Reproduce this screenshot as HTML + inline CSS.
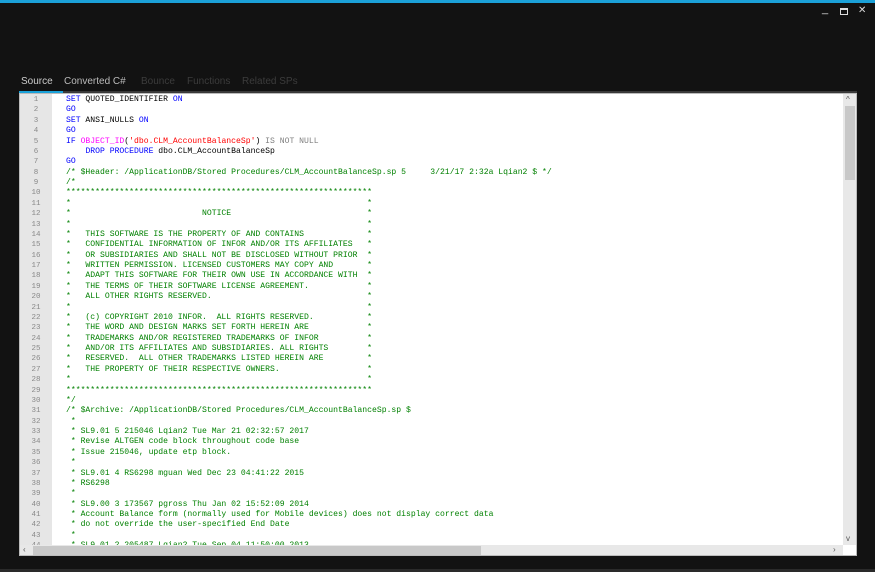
<!DOCTYPE html>
<html><head><meta charset="utf-8"><style>
*{margin:0;padding:0;box-sizing:border-box}
body{width:875px;height:572px;background:#121212;position:relative;overflow:hidden;font-family:"Liberation Sans",sans-serif}
.top{position:absolute;left:0;top:0;width:875px;height:3px;background:#1ba1d8}
.wc{position:absolute;top:6px;color:#ddd;font-size:11px}
.tabs{position:absolute;top:76px;left:21px;font-size:10px;color:#3c3c3c}
.tabs span{position:absolute;white-space:nowrap}
.tline{position:absolute;left:19px;top:91px;width:838px;height:2px;background:#3a3a3a}
.tsel{position:absolute;left:19px;top:91px;width:44px;height:2px;background:#1ba1d8}
.ed{position:absolute;left:19px;top:93px;width:838px;height:463px;background:#fff;overflow:hidden;border:1px solid #bbb}
.gut{position:absolute;left:0;top:0;width:32px;height:100%;background:#e6e6e6}
.ln{position:absolute;left:0;width:32px;text-align:center;font-family:"Liberation Mono",monospace;font-size:7.5px;color:#888;line-height:10.38px}
.cd{position:absolute;left:46px;font-family:"Liberation Mono",monospace;font-size:8.1px;line-height:10.38px;white-space:pre;color:#000}
.k{color:#0000ff}.c{color:#008000}.r{color:#ff0000}.f{color:#ff00ff}.g{color:#808080}
.vs{position:absolute;left:823px;top:0;width:13px;height:451px;background:#e8e8e8}
.vt{position:absolute;left:825px;top:12px;width:10px;height:74px;background:#c8c8c8}
.hs{position:absolute;left:0;top:451px;width:823px;height:11px;background:#e8e8e8}
.ht{position:absolute;left:13px;top:452px;width:448px;height:9px;background:#c8c8c8}
.ar{position:absolute;font-size:8px;color:#555}
</style></head><body>
<div class="top"></div>
<div class="wc" style="left:822px;top:3px">_</div>
<div style="position:absolute;left:840px;top:8px;width:8px;height:7px;border:1px solid #ddd;border-top-width:2px"></div>
<div class="wc" style="left:858px;top:5px;font-size:10px">✕</div>
<div class="tabs"><span style="left:0;color:#ccc">Source</span><span style="left:43px;color:#bbb">Converted C#</span><span style="left:120px">Bounce</span><span style="left:166px">Functions</span><span style="left:221px">Related SPs</span></div>
<div class="tline"></div><div class="tsel"></div>
<div class="ed">
<div class="gut"></div>
<div class="ln" style="top:1px">1<br>2<br>3<br>4<br>5<br>6<br>7<br>8<br>9<br>10<br>11<br>12<br>13<br>14<br>15<br>16<br>17<br>18<br>19<br>20<br>21<br>22<br>23<br>24<br>25<br>26<br>27<br>28<br>29<br>30<br>31<br>32<br>33<br>34<br>35<br>36<br>37<br>38<br>39<br>40<br>41<br>42<br>43<br>44</div>
<div class="cd" style="top:1px"><span class="k">SET</span> QUOTED_IDENTIFIER <span class="k">ON</span>
<span class="k">GO</span>
<span class="k">SET</span> ANSI_NULLS <span class="k">ON</span>
<span class="k">GO</span>
<span class="k">IF</span> <span class="f">OBJECT_ID</span>(<span class="r">'dbo.CLM_AccountBalanceSp'</span>) <span class="g">IS NOT NULL</span>
    <span class="k">DROP PROCEDURE</span> dbo.CLM_AccountBalanceSp
<span class="k">GO</span>
<span class="c">/* $Header: /ApplicationDB/Stored Procedures/CLM_AccountBalanceSp.sp 5     3/21/17 2:32a Lqian2 $ */
/*
***************************************************************
*                                                             *
*                           NOTICE                            *
*                                                             *
*   THIS SOFTWARE IS THE PROPERTY OF AND CONTAINS             *
*   CONFIDENTIAL INFORMATION OF INFOR AND/OR ITS AFFILIATES   *
*   OR SUBSIDIARIES AND SHALL NOT BE DISCLOSED WITHOUT PRIOR  *
*   WRITTEN PERMISSION. LICENSED CUSTOMERS MAY COPY AND       *
*   ADAPT THIS SOFTWARE FOR THEIR OWN USE IN ACCORDANCE WITH  *
*   THE TERMS OF THEIR SOFTWARE LICENSE AGREEMENT.            *
*   ALL OTHER RIGHTS RESERVED.                                *
*                                                             *
*   (c) COPYRIGHT 2010 INFOR.  ALL RIGHTS RESERVED.           *
*   THE WORD AND DESIGN MARKS SET FORTH HEREIN ARE            *
*   TRADEMARKS AND/OR REGISTERED TRADEMARKS OF INFOR          *
*   AND/OR ITS AFFILIATES AND SUBSIDIARIES. ALL RIGHTS        *
*   RESERVED.  ALL OTHER TRADEMARKS LISTED HEREIN ARE         *
*   THE PROPERTY OF THEIR RESPECTIVE OWNERS.                  *
*                                                             *
***************************************************************
*/
/* $Archive: /ApplicationDB/Stored Procedures/CLM_AccountBalanceSp.sp $
 *
 * SL9.01 5 215046 Lqian2 Tue Mar 21 02:32:57 2017
 * Revise ALTGEN code block throughout code base
 * Issue 215046, update etp block.
 *
 * SL9.01 4 RS6298 mguan Wed Dec 23 04:41:22 2015
 * RS6298
 *
 * SL9.00 3 173567 pgross Thu Jan 02 15:52:09 2014
 * Account Balance form (normally used for Mobile devices) does not display correct data
 * do not override the user-specified End Date
 *
 * SL9.01 2 205487 Lqian2 Tue Sep 04 11:50:00 2013</span></div>
<div class="vs"></div><div class="vt"></div>
<div class="ar" style="left:826px;top:1px">^</div>
<div class="ar" style="left:826px;top:440px">v</div>
<div class="hs"></div><div class="ht"></div>
<div class="ar" style="left:3px;top:451px">‹</div>
<div class="ar" style="left:813px;top:451px">›</div>
</div>
<div style="position:absolute;left:0;top:569px;width:875px;height:3px;background:#2a2a2a"></div>
</body></html>
